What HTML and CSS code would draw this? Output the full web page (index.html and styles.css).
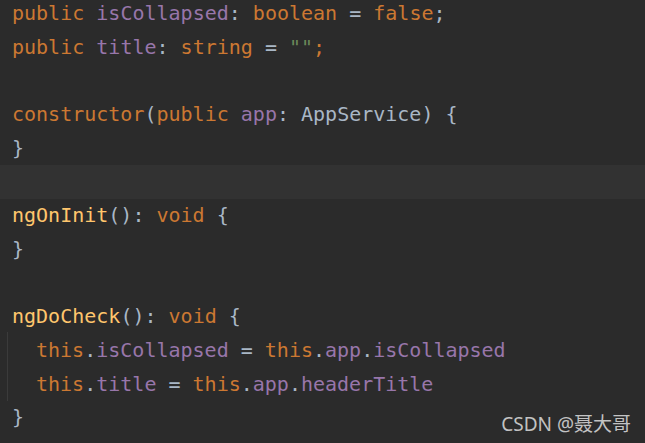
FILE: index.html
```html
<!DOCTYPE html>
<html>
<head>
<meta charset="utf-8">
<link rel="stylesheet" href="styles.css">
</head>
<body>
<div class="editor">
  <div class="line"><span class="kw">public</span> <span class="prop">isCollapsed</span>: <span class="kw">boolean</span> = <span class="kw">false</span>;</div>
  <div class="line"><span class="kw">public</span> <span class="prop">title</span>: <span class="kw">string</span> = <span class="str">""</span><span class="kw">;</span></div>
  <div class="line"></div>
  <div class="line"><span class="kw">constructor</span>(<span class="kw">public</span> <span class="prop">app</span>: AppService) {</div>
  <div class="line">}</div>
  <div class="line current"></div>
  <div class="line"><span class="fn">ngOnInit</span>(): <span class="kw">void</span> {</div>
  <div class="line">}</div>
  <div class="line"></div>
  <div class="line"><span class="fn">ngDoCheck</span>(): <span class="kw">void</span> {</div>
  <div class="block">
    <div class="line indent"><span class="kw">this</span>.<span class="prop">isCollapsed</span> = <span class="kw">this</span>.<span class="prop">app</span>.<span class="prop">isCollapsed</span></div>
    <div class="line indent"><span class="kw">this</span>.<span class="prop">title</span> = <span class="kw">this</span>.<span class="prop">app</span>.<span class="prop">headerTitle</span></div>
  </div>
  <div class="line">}</div>
</div>
<div class="watermark">CSDN @聂大哥</div>
</body>
</html>
```

FILE: styles.css
```css
html, body {
  margin: 0;
  padding: 0;
  background: #2b2b2b;
  width: 645px;
  height: 443px;
  overflow: hidden;
}
body {
  position: relative;
}
.editor {
  margin-top: -3px;
  font-family: "DejaVu Sans Mono", monospace;
  font-size: 20px;
  color: #a9b7c6;
}
.line {
  height: 33.7px;
  line-height: 33.7px;
  padding-left: 12px;
  white-space: pre;
}
.current {
  background: #323232;
}
.block {
  position: relative;
}
.block::before {
  content: "";
  position: absolute;
  left: 7px;
  top: -2px;
  bottom: 0;
  width: 1px;
  background: #3b3b3b;
}
.indent {
  padding-left: 36px;
}
.kw { color: #cc7832; }
.prop { color: #9876aa; }
.str { color: #6a8759; }
.fn { color: #ffc66d; }
.watermark {
  position: absolute;
  right: 14px;
  bottom: 6px;
  font-family: "Noto Sans", "Noto Sans CJK SC", sans-serif;
  font-size: 19px;
  color: rgba(255, 255, 255, 0.72);
}
```
